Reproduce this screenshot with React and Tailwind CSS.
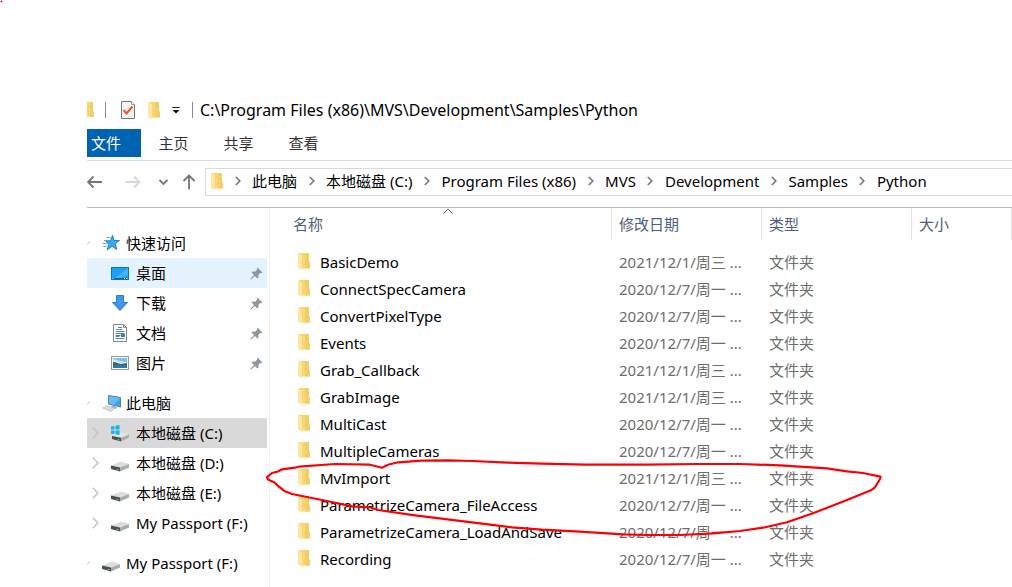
const TABS = ["主页", "共享", "查看"];

const CRUMBS = [
  "此电脑",
  "本地磁盘 (C:)",
  "Program Files (x86)",
  "MVS",
  "Development",
  "Samples",
  "Python",
];

const FOLDERS = [
  { name: "BasicDemo", date: "2021/12/1/周三 ..." },
  { name: "ConnectSpecCamera", date: "2020/12/7/周一 ..." },
  { name: "ConvertPixelType", date: "2020/12/7/周一 ..." },
  { name: "Events", date: "2020/12/7/周一 ..." },
  { name: "Grab_Callback", date: "2021/12/1/周三 ..." },
  { name: "GrabImage", date: "2021/12/1/周三 ..." },
  { name: "MultiCast", date: "2020/12/7/周一 ..." },
  { name: "MultipleCameras", date: "2020/12/7/周一 ..." },
  { name: "MvImport", date: "2021/12/1/周三 ..." },
  { name: "ParametrizeCamera_FileAccess", date: "2020/12/7/周一 ..." },
  { name: "ParametrizeCamera_LoadAndSave", date: "2020/12/7/周一 ..." },
  { name: "Recording", date: "2020/12/7/周一 ..." },
];

const QUICK = [
  { label: "桌面", Icon: DesktopIcon, row: "bg-[#e5f3ff]" },
  { label: "下载", Icon: DownloadIcon },
  { label: "文档", Icon: DocumentIcon },
  { label: "图片", Icon: PictureIcon },
];

const DRIVES = [
  { label: "本地磁盘 (C:)", Icon: SystemDriveIcon, row: "bg-[#d9d9d9]" },
  { label: "本地磁盘 (D:)", Icon: DriveIcon },
  { label: "本地磁盘 (E:)", Icon: DriveIcon },
  { label: "My Passport (F:)", Icon: DriveIcon },
];

function FolderIcon() {
  return (
    <svg width="12" height="17" viewBox="0 0 12 17" className="shrink-0">
      <path d="M1 0h10v9.500h1V15.500H1z" fill="#f7d774" />
      <path d="M7 0h4v9.500h1V15.500H7z" fill="#f2cd68" />
      <path d="M0 0.500L4 2V17L0 14.500z" fill="#fde6a0" />
    </svg>
  );
}

function SmallFolderIcon() {
  return (
    <svg width="8" height="16" viewBox="0 0 8 16" className="shrink-0">
      <path d="M0 0h6v9.500h1V15H0z" fill="#f7d774" />
      <path d="M3 0h3v9.500h1V15H3z" fill="#f2cd68" />
    </svg>
  );
}

function PropertiesIcon() {
  return (
    <svg width="16" height="18" viewBox="0 0 16 18" className="shrink-0">
      <path d="M1.500 0.500h10l3 3v14h-13z" fill="#f4f4f8" stroke="#77797d" />
      <path d="M11.500 0.500v3h3" fill="#fff" stroke="#9a9ca0" />
      <path d="M3.500 9l3 3.500L12.500 5.500" fill="none" stroke="#ea5a1b" strokeWidth="2" />
    </svg>
  );
}

function CustomizeIcon() {
  return (
    <svg width="8" height="7" viewBox="0 0 8 7">
      <path d="M0.500 0h7v1h-7zM0.500 3h7L4 6.500z" fill="#111" />
    </svg>
  );
}

function ArrowIcon({ d, color }) {
  return (
    <svg width="16" height="16" viewBox="0 0 16 16" fill="none" stroke={color} strokeWidth="1.800">
      <path d={d} />
    </svg>
  );
}

function Chevron({ color }) {
  return (
    <svg width="6" height="10" viewBox="0 0 6 10" fill="none" stroke={color} strokeWidth="1.700">
      <path d="M0.800 1L4.800 5L0.800 9" />
    </svg>
  );
}

function TreeChevron() {
  return (
    <svg width="7" height="12" viewBox="0 0 7 12" fill="none" stroke="#c4c4c4" strokeWidth="1.500">
      <path d="M0.800 0.800L6 6L0.800 11.200" />
    </svg>
  );
}

function StarIcon() {
  return (
    <svg width="18" height="18" viewBox="0 0 18 18" className="shrink-0">
      <path
        d="M10.500 1.500l1.700 5h5.300l-4.200 3.300 1.500 5.700-4.700-3.300L5 16l1.900-5.500L3.500 6.800h5z"
        fill="#36a9f0"
        stroke="#1778c2"
        strokeWidth="0.900"
      />
      <path d="M4.500 3.500h4M2 6.500h3M0.500 9.500h4M1.500 12.500h3" stroke="#4fa8e4" />
    </svg>
  );
}

function DesktopIcon() {
  return (
    <svg width="18" height="18" viewBox="0 0 18 18" className="shrink-0">
      <rect x="0.500" y="3.500" width="17" height="12" fill="#1ba0f8" stroke="#0b72bd" />
      <path d="M17 4v7L9 14H4z" fill="#45b4fb" />
      <path d="M1 14.500h16" stroke="#0763a8" />
      <path d="M1.500 14.500h1M13 14.500h1M15 14.500h1.500" stroke="#fff" />
    </svg>
  );
}

function DownloadIcon() {
  return (
    <svg width="18" height="18" viewBox="0 0 18 18" className="shrink-0">
      <path d="M5.500 1.500h7v7h4L9 16.500L1.500 8.500h4z" fill="#3f97e8" stroke="#2a7cc9" />
    </svg>
  );
}

function DocumentIcon() {
  return (
    <svg width="18" height="18" viewBox="0 0 18 18" className="shrink-0">
      <path d="M2.500 0.500h10l3 3v14h-13z" fill="#fff" stroke="#85898e" />
      <path d="M12.500 0.500v3h3" fill="none" stroke="#85898e" />
      <path d="M7 3.500h4M5 5.500h6M4.500 7.500h9M4.500 12.500h4M4.500 14.500h9" stroke="#4a90c8" />
      <path d="M4.500 9.500h9M4.500 11.500h5" stroke="#6c7680" />
      <path d="M10 10h4v3h-4z" fill="#2e86c9" />
    </svg>
  );
}

function PictureIcon() {
  return (
    <svg width="18" height="18" viewBox="0 0 18 18" className="shrink-0">
      <rect x="0.500" y="2.500" width="17" height="13" fill="#fff" stroke="#979ba0" />
      <path d="M2 4h14v10H2z" fill="#7fbdf0" />
      <path d="M2 5.500c3-1 4 1 7 1.500s5 1 7 1V11H2z" fill="#cfe6f5" />
      <path d="M2 8c3 0 6 2 8 2s4-1 6-1v3H2z" fill="#386b5c" />
      <path d="M2 11.500h14V14H2z" fill="#2d76b8" />
    </svg>
  );
}

function ComputerIcon() {
  return (
    <svg width="20" height="18" viewBox="0 0 20 18" className="shrink-0">
      <path d="M6.500 1.500L18.500 3.500V13L6.500 10z" fill="#37a5ef" stroke="#5f7f99" />
      <path d="M7 2L18 4L12 10.800L7 9.500z" fill="#62bdf8" />
      <path d="M10 11.500l5 1.500-1 2-5-1.500z" fill="#a8b0b8" />
      <path d="M0.500 14L5 11.500L12.500 14.500L8.500 17.500z" fill="#d5dade" stroke="#b4babf" strokeWidth="0.600" />
    </svg>
  );
}

function DriveIcon() {
  return (
    <svg width="18" height="18" viewBox="0 0 18 18" className="shrink-0">
      <path d="M0 11.500L10 7.500L18 10L9 13.500z" fill="#dcdde0" />
      <path d="M9 13.500L18 10V13.500L9 17.500z" fill="#a9abae" />
      <path d="M0 11.500L9 13.500V17.500L0 15z" fill="#4b4f50" />
      <path d="M5.500 14.700l2 0.500v1l-2-0.500z" fill="#5fd07a" />
    </svg>
  );
}

function SystemDriveIcon() {
  return (
    <svg width="18" height="18" viewBox="0 0 18 18" className="shrink-0">
      <path d="M1 12L11 8.500L18 10.500L10 13.800z" fill="#e3e4e6" />
      <path d="M10 13.800L18 10.500V13.500L10 17.500z" fill="#a9abae" />
      <path d="M1 12L10 13.800V17.500L1 15z" fill="#4b4f50" />
      <path d="M6.500 15l2 0.500v1l-2-0.500z" fill="#5fd07a" />
      <path d="M0 2.500l3.500-0.500v3.500H0zM4.500 1.800L8.500 1v4.500h-4zM0 6.500h3.500V10L0 9.500zM4.500 6.500h4V11l-4-0.800z" fill="#12b2ee" />
    </svg>
  );
}

function PinIcon() {
  return (
    <svg width="13" height="13" viewBox="0 0 13 13" className="shrink-0">
      <path
        d="M7.500 0.500L12.500 5.500L11.300 6.200L10.500 5.800L8.300 8L8.500 10.500L7.500 11.500L4.800 8.900L1 12.500L0.300 12.300L0.500 11.800L4 8L1.500 5.300L2.500 4.400L5 4.700L7.300 2.500L6.900 1.500z"
        fill="#8c979f"
      />
    </svg>
  );
}

function TitleBar() {
  return (
    <div className="mb-[3px] flex h-8 items-center">
      <SmallFolderIcon />
      <div className="ml-2.5 h-4 w-px bg-[#8a8a8a]" />
      <div className="ml-3.5 flex items-center gap-3">
        <PropertiesIcon />
        <FolderIcon />
        <button type="button" aria-label="自定义快速访问工具栏">
          <CustomizeIcon />
        </button>
      </div>
      <div className="ml-3 h-4 w-px bg-[#8a8a8a]" />
      <h1 className="ml-[7px] text-base leading-5 whitespace-nowrap">
        C:\Program Files (x86)\MVS\Development\Samples\Python
      </h1>
    </div>
  );
}

function Ribbon() {
  return (
    <div className="flex h-8 items-start border-b border-[#dadbdc]">
      <button type="button" className="h-7 w-[54px] bg-[#0063b1] pr-4 pb-px text-white">
        文件
      </button>
      {TABS.map((tab) => (
        <button key={tab} type="button" className="h-7 w-[65px] text-[#333]">
          {tab}
        </button>
      ))}
    </div>
  );
}

function AddressBar() {
  return (
    <div className="mt-[7px] flex h-7 items-center">
      <div className="flex w-[118px] shrink-0 items-center">
        <button type="button" aria-label="后退">
          <ArrowIcon d="M15 8H1M6.500 2.500L1 8L6.500 13.500" color="#757575" />
        </button>
        <button type="button" aria-label="前进" className="ml-[22px]">
          <ArrowIcon d="M0.500 8H14.500M9 2.500L14.500 8L9 13.500" color="#d6d6d6" />
        </button>
        <button type="button" aria-label="最近" className="ml-3.5">
          <ArrowIcon d="M4.500 6L8.500 10L12.500 6" color="#777" />
        </button>
        <button type="button" aria-label="向上" className="ml-2.5">
          <ArrowIcon d="M8 15.500V1.500M2.500 7L8 1.500L13.500 7" color="#757575" />
        </button>
      </div>
      <nav
        aria-label="地址"
        className="flex h-full flex-1 items-center overflow-hidden border border-r-0 border-[#d9d9d9] pb-0.5 pl-[5px] whitespace-nowrap"
      >
        <FolderIcon />
        {CRUMBS.map((crumb) => (
          <div key={crumb} className="flex items-center">
            <span className="flex w-[29px] justify-center">
              <Chevron color="#7a7a7a" />
            </span>
            <a href="#">{crumb}</a>
          </div>
        ))}
      </nav>
    </div>
  );
}

function TreeItem({ label, Icon, row = "", pinned, expandable }) {
  return (
    <a href="#" className={`flex h-[30px] items-center pr-1 ${row}`}>
      <span className="flex w-6 shrink-0 pl-[5px]">
        {expandable && <TreeChevron />}
      </span>
      <Icon />
      <span className="ml-[7px] flex-1 whitespace-nowrap">{label}</span>
      {pinned && <PinIcon />}
    </a>
  );
}

function TreeRoot({ label, Icon }) {
  return (
    <a href="#" className="flex h-[30px] items-center">
      <span className="flex w-[15px] shrink-0">
        <svg width="3" height="4" viewBox="0 0 3 4">
          <path d="M0 3.500L2.500 0.500" stroke="#bbb" />
        </svg>
      </span>
      <span className="flex w-6 shrink-0">
        <Icon />
      </span>
      <span className="whitespace-nowrap">{label}</span>
    </a>
  );
}

function Sidebar() {
  return (
    <aside className="flex w-[183px] shrink-0 flex-col gap-2.5 border-r border-[#f0f0f0] pt-5 pr-0.5">
      <div>
        <TreeRoot label="快速访问" Icon={StarIcon} />
        {QUICK.map((item) => (
          <TreeItem key={item.label} {...item} pinned />
        ))}
      </div>
      <div>
        <TreeRoot label="此电脑" Icon={ComputerIcon} />
        {DRIVES.map((item) => (
          <TreeItem key={item.label} {...item} expandable />
        ))}
      </div>
      <TreeRoot label="My Passport (F:)" Icon={DriveIcon} />
    </aside>
  );
}

function FileTable() {
  return (
    <div className="min-w-0 flex-1 overflow-hidden">
      <table className="w-[742px] table-fixed border-separate border-spacing-0 text-left">
        <colgroup>
          <col className="w-[342px]" />
          <col className="w-[150px]" />
          <col className="w-[150px]" />
          <col className="w-[100px]" />
        </colgroup>
        <thead>
          <tr className="h-8 text-[#4c607a]">
            <th className="relative border-r border-[#e2e2e2] pl-[23px] font-normal">
              名称
              <svg
                width="10"
                height="6"
                viewBox="0 0 10 6"
                className="absolute top-0 left-1/2 ml-[2px]"
                fill="none"
                stroke="#666"
              >
                <path d="M0.500 5.500L5 1L9.500 5.500" />
              </svg>
            </th>
            <th className="border-r border-[#e2e2e2] pl-[7px] font-normal">修改日期</th>
            <th className="border-r border-[#e2e2e2] pl-[7px] font-normal">类型</th>
            <th className="border-r border-[#e2e2e2] pl-[7px] font-normal">大小</th>
          </tr>
        </thead>
        <tbody className="text-[#6d6d6d] before:block before:h-2 before:content-['']">
          {FOLDERS.map((folder) => (
            <tr key={folder.name} className="h-[27px]">
              <td className="pl-7">
                <a href="#" className="flex items-center gap-2.5 text-black">
                  <FolderIcon />
                  {folder.name}
                </a>
              </td>
              <td className="pl-[7px] whitespace-nowrap">{folder.date}</td>
              <td className="pl-[7px]">文件夹</td>
              <td />
            </tr>
          ))}
        </tbody>
      </table>
    </div>
  );
}

// Hand-drawn red loop around the MvImport row
function RedMarkup() {
  return (
    <svg
      width="1012"
      height="587"
      viewBox="0 0 1012 587"
      className="pointer-events-none absolute top-0 left-0"
      fill="none"
      stroke="#fb0007"
      strokeWidth="2.200"
      strokeLinejoin="round"
    >
      <path d="M267 477L272 473L278 471.500L282 469.300L295 467.700L299 466.700L335 464L370 464.700L382 467.700L388 464.700L398 462.300L422 460.700L448 460.300L472 461L508 462.700L542 463.700L585 464.700L647 464.700L697 464L740 464L780 465.300L827 468.300L847 471.300L863 473L880.500 476.700L880 479L875 487.300L871.500 490L847 500L813 513.300L787 522.300L763 527.700L740 531L713 533.300L680 535L647 535L623 534.300L580 531.700L542 529.700L512 527.300L472 522.300L415 515.300L378 510L370 507.300L352 506.300L322 500L292 494L285 491.300L278 486L275 482.700L268 479.500z" />
      <path d="M0 1.500h3M1.500 0v3" stroke="#ff8a8f" strokeWidth="1" />
      <path d="M1 1.500h1" stroke="#e00010" strokeWidth="1" />
    </svg>
  );
}

export default function App() {
  return (
    <div className="relative flex min-h-screen flex-col overflow-hidden bg-white pt-[94px] pl-[87px] font-['Noto_Sans','Noto_Sans_CJK_SC',sans-serif] text-[15px] leading-5 text-black">
      <TitleBar />
      <Ribbon />
      <AddressBar />
      <div className="mt-[11px] flex flex-1 border-t border-[#bcbcbc]">
        <Sidebar />
        <FileTable />
      </div>
      <RedMarkup />
    </div>
  );
}
